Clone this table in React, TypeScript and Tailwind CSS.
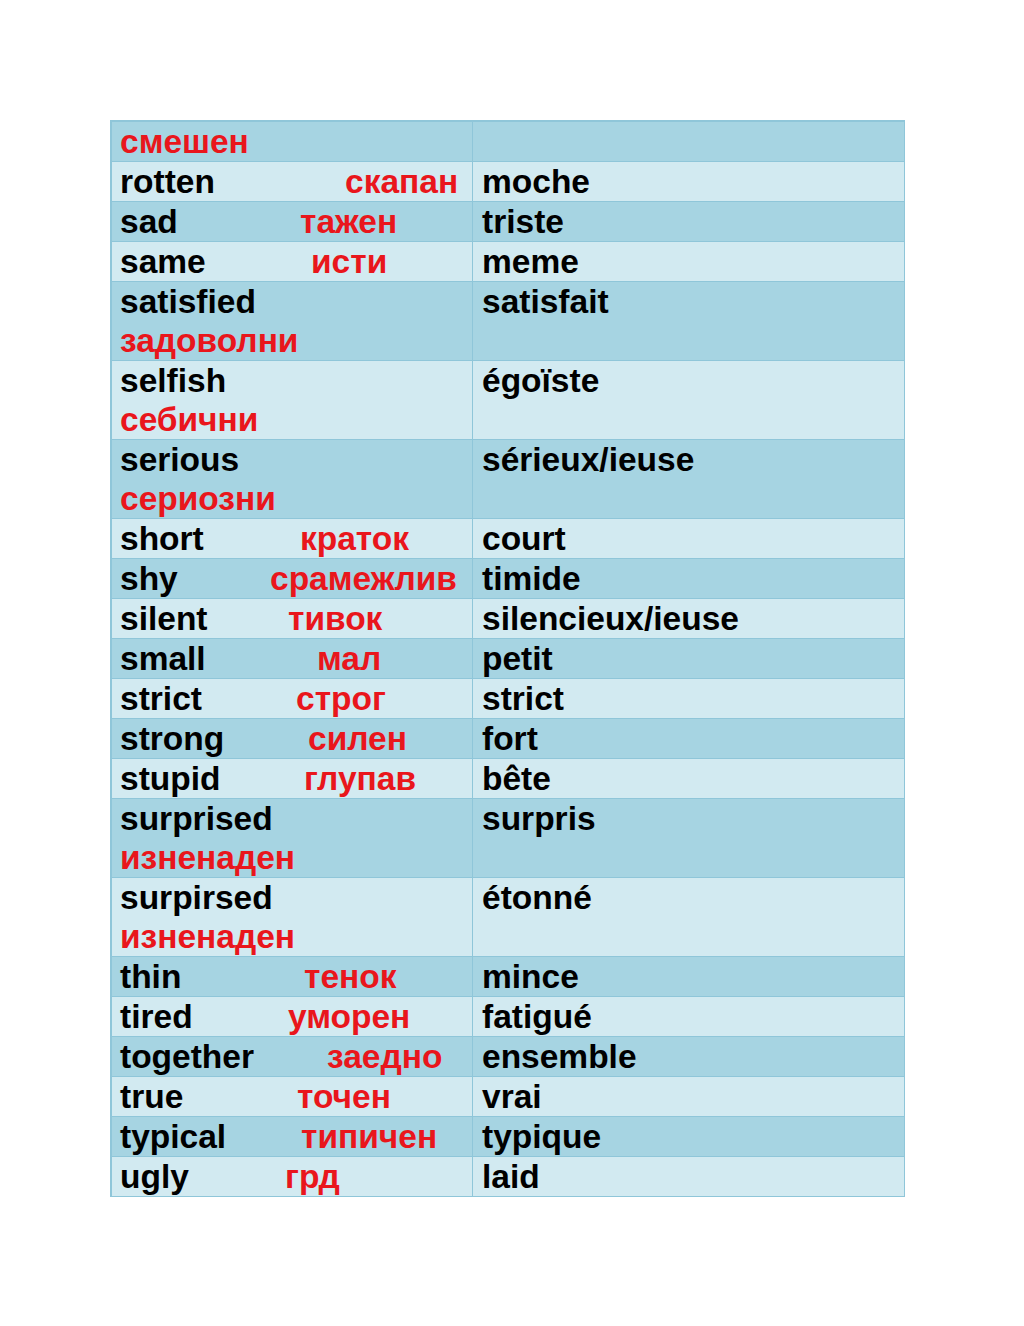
type Row = {
  en?: string
  mk?: string
  // red word shares the first line, pushed right like the tabbed doc
  offset?: string
  // red word sits on its own second line
  below?: boolean
  fr: string
}

const rows: Row[] = [
  { mk: "смешен", below: true, fr: "" },
  { en: "rotten", mk: "скапан", offset: "ml-[225px]", fr: "moche" },
  { en: "sad", mk: "тажен", offset: "ml-[180px]", fr: "triste" },
  { en: "same", mk: "исти", offset: "ml-[191px]", fr: "meme" },
  { en: "satisfied", mk: "задоволни", below: true, fr: "satisfait" },
  { en: "selfish", mk: "себични", below: true, fr: "égoïste" },
  { en: "serious", mk: "сериозни", below: true, fr: "sérieux/ieuse" },
  { en: "short", mk: "краток", offset: "ml-[180px]", fr: "court" },
  { en: "shy", mk: "срамежлив", offset: "ml-[150px]", fr: "timide" },
  { en: "silent", mk: "тивок", offset: "ml-[168px]", fr: "silencieux/ieuse" },
  { en: "small", mk: "мал", offset: "ml-[197px]", fr: "petit" },
  { en: "strict", mk: "строг", offset: "ml-[176px]", fr: "strict" },
  { en: "strong", mk: "силен", offset: "ml-[188px]", fr: "fort" },
  { en: "stupid", mk: "глупав", offset: "ml-[184px]", fr: "bête" },
  { en: "surprised", mk: "изненаден", below: true, fr: "surpris" },
  { en: "surpirsed", mk: "изненаден", below: true, fr: "étonné" },
  { en: "thin", mk: "тенок", offset: "ml-[184px]", fr: "mince" },
  { en: "tired", mk: "уморен", offset: "ml-[168px]", fr: "fatigué" },
  { en: "together", mk: "заедно", offset: "ml-[207px]", fr: "ensemble" },
  { en: "true", mk: "точен", offset: "ml-[177px]", fr: "vrai" },
  { en: "typical", mk: "типичен", offset: "ml-[181px]", fr: "typique" },
  { en: "ugly", mk: "грд", offset: "ml-[165px]", fr: "laid" },
]

function LeftCell({ row }: { row: Row }) {
  if (row.below) {
    return (
      <div className="flex flex-col">
        {row.en && <span>{row.en}</span>}
        <span className="text-[#e9161c]">{row.mk}</span>
      </div>
    )
  }
  return (
    <div className="grid">
      <span className="[grid-area:1/1] whitespace-nowrap">{row.en}</span>
      <span className={`[grid-area:1/1] whitespace-nowrap text-[#e9161c] ${row.offset}`}>{row.mk}</span>
    </div>
  )
}

export default function App() {
  return (
    <div className="min-h-[1326px] bg-white pt-[120px]">
      <div
        className="ml-[110px] w-[795px] border-l-2 border-t-2 border-[#8fc6d9] text-[33.5px] leading-[39px] font-bold text-black"
        style={{ fontFamily: '"Liberation Sans", Arial, "Noto Sans", sans-serif' }}
      >
        {rows.map((row, i) => (
          <div
            key={i}
            className={`grid grid-cols-[361px_432px] ${i % 2 === 0 ? "bg-[#a6d4e2]" : "bg-[#d2eaf1]"}`}
          >
            <div className="border-b border-r border-[#8fc6d9] pl-[8px]">
              <LeftCell row={row} />
            </div>
            <div className="border-b border-r border-[#8fc6d9] pl-[9px]">{row.fr}</div>
          </div>
        ))}
      </div>
    </div>
  )
}
